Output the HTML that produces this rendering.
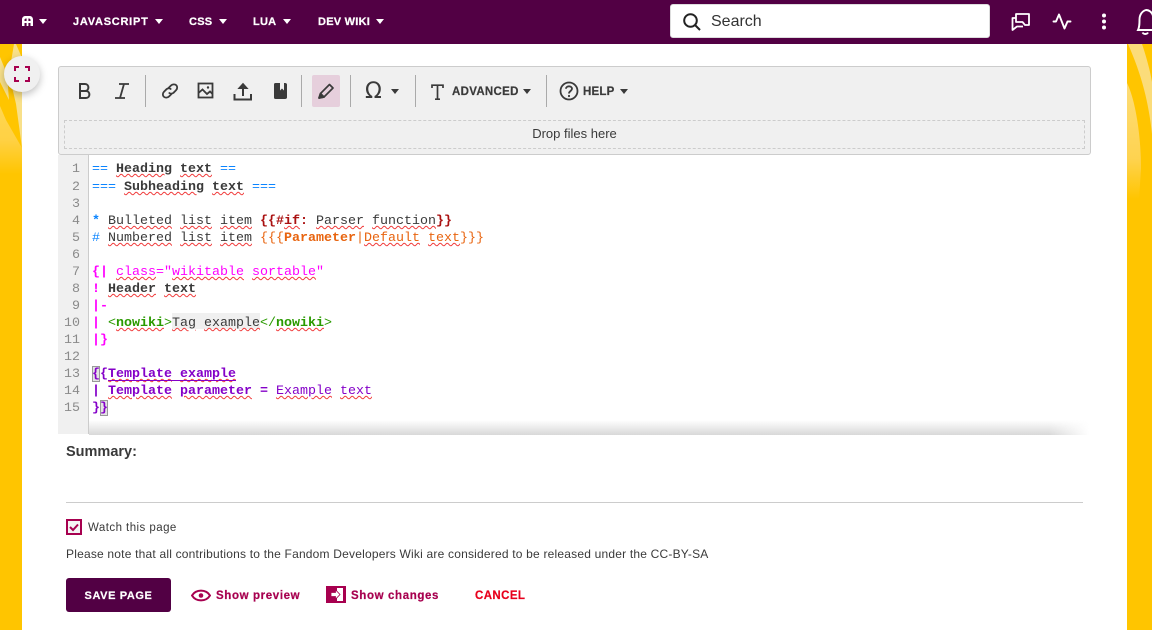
<!DOCTYPE html>
<html lang="en"><head><meta charset="utf-8"><title>Editing</title>
<style>
*{box-sizing:border-box}
html,body{margin:0;padding:0;width:1152px;height:630px;overflow:hidden;background:#fff;font-family:"Liberation Sans",sans-serif;color:#3a3a3a}
.a{position:absolute}
#top{left:0;top:0;width:1152px;height:44px;background:#520044}
.nav{position:absolute;top:16px;font:bold 11px/13px "Liberation Sans",sans-serif;color:#fff;letter-spacing:.25px;white-space:nowrap;-webkit-text-stroke:.25px #fff}
.car{position:absolute;width:0;height:0;border-left:4.5px solid transparent;border-right:4.5px solid transparent;border-top:5px solid #fff}
.car.d{border-left-width:4.5px;border-right-width:4.5px;border-top-color:#3a3a3a}
.sep{position:absolute;top:75px;width:1px;height:32px;background:#aaa}
.cm{position:absolute;left:92px;font:13.333px/17px "Liberation Mono",monospace;white-space:pre;color:#3a3a3a}
.ln{position:absolute;left:58px;width:22px;text-align:right;font:13.333px/17px "Liberation Mono",monospace;color:#8a8a8a}
u{text-decoration:underline wavy #f03a3a 1.2px;text-underline-offset:1px}
b{font-weight:bold}
.bl{color:#0a84ff}.h{font-weight:bold;color:#3a3a3a}.fn{color:#a11;font-weight:bold}.p{color:#e8640f}.t{color:#f0f}.g{color:#2a9a00}.tp{color:#8400c8}
.lk{position:absolute;top:590px;font:bold 11.5px/13px "Liberation Sans",sans-serif;color:#a7004f;letter-spacing:.63px;white-space:nowrap;-webkit-text-stroke:.2px currentColor}
</style></head><body>

<!-- side banners -->
<svg class="a" style="left:0;top:44px" width="22" height="130" viewBox="0 0 22 130">
<defs>
<linearGradient id="f" x1="0" y1="0" x2="0" y2="1"><stop offset="0" stop-color="#ffd650"/><stop offset=".5" stop-color="#ffd144"/><stop offset="1" stop-color="#ffc500"/></linearGradient>
<linearGradient id="r" x1="0" y1="0" x2="0" y2="1"><stop offset="0" stop-color="#fddc78"/><stop offset=".65" stop-color="#fed350"/><stop offset="1" stop-color="#ffc500"/></linearGradient>
</defs>
<rect width="22" height="130" fill="#ffc500"/>
<path d="M0 62L6 76L22 104V130H0Z" fill="url(#f)"/>
<path d="M14 0H16L22 14V104L16 60L9 30Z" fill="#f8e08a"/>
<path d="M0 13L7 30L9 56L0 38Z" fill="#f8e08a"/>
</svg>
<div class="a" style="left:0;top:174px;width:22px;height:456px;background:#ffc500"></div>
<svg class="a" style="left:1127px;top:44px" width="25" height="586" viewBox="0 0 25 586">
<rect width="25" height="586" fill="#ffc500"/>
<path d="M1 0H15C19 12 23 26 25 38V90C21 52 12 25 1 0Z" fill="#fbdc7a"/>
<path d="M0 39C8 55 14 90 14 125L12 155H0Z" fill="url(#r)"/>
</svg>

<!-- top nav -->
<div id="top" class="a">
<svg class="a" style="left:21px;top:15px" width="13" height="12" viewBox="0 0 13 12"><path d="M1 11V4.500C1 2.500 2.500 1 4 1H9C10.500 1 12 2.500 12 4.500V11H9.500V8H7.400V11H5.600V8H3.500V11ZM3.500 4.800V6H5.600V3.500C4.500 3.300 3.500 3.800 3.500 4.800ZM7.400 3.500V6H9.500V4.800C9.500 3.800 8.500 3.300 7.400 3.500Z" fill="#fff" fill-rule="evenodd"/></svg>
<i class="car" style="left:39px;top:19px"></i>
<span class="nav" style="left:73px;letter-spacing:.75px">JAVASCRIPT</span><i class="car" style="left:155px;top:19px"></i>
<span class="nav" style="left:189px">CSS</span><i class="car" style="left:219px;top:19px"></i>
<span class="nav" style="left:253px">LUA</span><i class="car" style="left:283px;top:19px"></i>
<span class="nav" style="left:318px">DEV WIKI</span><i class="car" style="left:376px;top:19px"></i>
<div class="a" style="left:670px;top:4px;width:320px;height:34px;background:#fff;border:1px solid #ddd;border-radius:3px"></div>
<svg class="a" style="left:682px;top:12px" width="20" height="20" viewBox="0 0 20 20" fill="none" stroke="#222" stroke-width="2"><circle cx="8.500" cy="8.500" r="6.300"/><path d="M13 13L18 18"/></svg>
<span class="a" style="left:711px;top:12px;font:16px/19px 'Liberation Sans',sans-serif;color:#333">Search</span>
<svg class="a" style="left:1010px;top:12px" width="20" height="20" viewBox="0 0 20 20" fill="none" stroke="#fff" stroke-width="1.800" stroke-linejoin="round"><path d="M6 2H19V13H15L12.500 10H6Z"/><path d="M6 6H2.500V18L7 14.500H13"/></svg>
<svg class="a" style="left:1052px;top:12px" width="20" height="20" viewBox="0 0 20 20" fill="none" stroke="#fff" stroke-width="1.900" stroke-linejoin="round" stroke-linecap="round"><path d="M1.500 9.500H4L7 2.500L12.500 16.500L15.500 9.500H18.500"/></svg>
<svg class="a" style="left:1100px;top:12px" width="8" height="20" viewBox="0 0 8 20" fill="#fff"><circle cx="4" cy="3.500" r="2"/><circle cx="4" cy="9.500" r="2"/><circle cx="4" cy="15.500" r="2"/></svg>
<svg class="a" style="left:1136px;top:9px" width="16" height="26" viewBox="0 0 16 26" fill="none" stroke="#fff" stroke-width="1.900"><path d="M2 21C3.500 18 3.500 15 3.500 10.500C3.500 6 6 2 10 1C13 1 16 3 17 7V21H2Z"/><path d="M6.500 23.500C7.500 25.500 11 25.500 12 23.500"/></svg>
</div>

<!-- page body -->
<div class="a" style="left:4px;top:56px;width:36px;height:36px;border-radius:50%;background:#f0f0f0;box-shadow:0 3px 8px rgba(0,0,0,.25)"></div>
<svg class="a" style="left:14px;top:66px" width="16" height="16" viewBox="0 0 16 16" fill="none" stroke="#a7004f" stroke-width="2"><path d="M1 5V1H5M11 1H15V5M15 11V15H11M5 15H1V11"/></svg>

<!-- toolbar -->
<div class="a" style="left:58px;top:66px;width:1033px;height:89px;background:#f0f0f0;border:1px solid #ccc;border-radius:3px"></div>
<div class="a" style="left:64px;top:120px;width:1021px;height:29px;border:1px dashed #ccc;text-align:center;font:13px/26px 'Liberation Sans',sans-serif;color:#3a3a3a">Drop files here</div>

<svg class="a" style="left:75px;top:81px" width="18" height="20" viewBox="0 0 18 20" fill="none" stroke="#3a3a3a" stroke-width="2"><path d="M5 3H10C14.500 3 14.500 10 10 10H5ZM5 10H11C15.500 10 15.500 17 11 17H5Z"/></svg>
<svg class="a" style="left:113px;top:81px" width="18" height="20" viewBox="0 0 18 20" fill="none" stroke="#3a3a3a" stroke-width="1.800"><path d="M6 3H16M2 17H12M11 3L7 17"/></svg>
<div class="sep" style="left:145px"></div>
<svg class="a" style="left:161px;top:82px" width="18" height="18" viewBox="0 0 18 18" fill="none" stroke="#3a3a3a" stroke-width="1.800"><path d="M7.500 6L10 3.500C11.500 2 14 2 15.300 3.300C16.500 4.500 16.500 6.800 15 8.300L12.500 10.800C11 12 9 12 7.800 10.500"/><path d="M10.500 12L8 14.500C6.500 16 4 16 2.800 14.700C1.500 13.400 1.500 11.200 3 9.700L5.500 7.200C7 6 9 6 10.200 7.500"/></svg>
<svg class="a" style="left:197px;top:82px" width="18" height="18" viewBox="0 0 18 18" fill="none" stroke="#3a3a3a" stroke-width="1.800"><rect x="1.500" y="1.500" width="14" height="14"/><path d="M1.500 11L5.500 7.500L10 12L13 9.500L15.500 12"/><circle cx="11" cy="5.500" r="1.200" fill="#3a3a3a" stroke="none"/></svg>
<svg class="a" style="left:233px;top:81px" width="20" height="20" viewBox="0 0 20 20" fill="none" stroke="#3a3a3a" stroke-width="2"><path d="M1.500 13V18.500H18V13"/><path d="M10 15V3"/><path d="M5.500 7.500L10 2.500L14.500 7.500Z" fill="#3a3a3a" stroke-width="1"/></svg>
<svg class="a" style="left:273px;top:82px" width="14" height="18" viewBox="0 0 14 18"><path d="M1 2.500C1 1.500 1.500 1 2.500 1H7V8.500L9 6.500L11 8.500V1H12C13 1 14 1.500 14 2.500V15.500C14 16.500 13 17 12 17H2.500C1.500 17 1 16.500 1 15.500Z" fill="#3a3a3a"/></svg>
<div class="sep" style="left:301px"></div>
<div class="a" style="left:312px;top:75px;width:28px;height:32px;background:#e6cfdc;border-radius:2px"></div>
<svg class="a" style="left:317px;top:82px" width="19" height="18" viewBox="0 0 19 18" fill="none" stroke="#3a3a3a" stroke-width="1.700" stroke-linejoin="round"><path d="M2 16L3.500 11.500L12.500 2.500L16 6L7 15Z"/><path d="M2 16L7 15L3.500 11.500Z" fill="#3a3a3a"/></svg>
<div class="sep" style="left:350px"></div>
<span class="a" style="left:365px;top:79px;font:22px/26px 'DejaVu Sans',sans-serif;color:#3a3a3a">Ω</span>
<i class="car d" style="left:391px;top:89px"></i>
<div class="sep" style="left:415px"></div>
<svg class="a" style="left:431px;top:84px" width="13" height="16" viewBox="0 0 13 16" fill="none" stroke="#3a3a3a" stroke-width="1.700"><path d="M1 4V1.200H12V4M6.500 1.200V15M4 15.200H9"/></svg>
<span class="a" style="left:452px;top:85px;font:bold 11.500px/14px 'Liberation Sans',sans-serif;color:#3a3a3a;letter-spacing:.3px;-webkit-text-stroke:.2px #3a3a3a">ADVANCED</span>
<i class="car d" style="left:523px;top:89px"></i>
<div class="sep" style="left:546px"></div>
<svg class="a" style="left:559px;top:81px" width="20" height="20" viewBox="0 0 20 20" fill="none" stroke="#3a3a3a" stroke-width="1.800"><circle cx="10" cy="10" r="8.500"/><path d="M7 7.800C7 4.500 13 4.500 13 7.800C13 10 10 10 10 12.500"/><circle cx="10" cy="15" r="1.100" fill="#3a3a3a" stroke="none"/></svg>
<span class="a" style="left:583px;top:85px;font:bold 11.500px/14px 'Liberation Sans',sans-serif;color:#3a3a3a;letter-spacing:.2px;-webkit-text-stroke:.2px #3a3a3a">HELP</span>
<i class="car d" style="left:620px;top:89px"></i>

<!-- editor -->
<div class="a" style="left:58px;top:155px;width:31px;height:279px;background:#f0f0f0;border-right:1px solid #ccc"></div>
<div class="a" style="left:89px;top:420px;width:1000px;height:15px;background:linear-gradient(to bottom,rgba(216,216,216,0),#d8d8d8);-webkit-mask-image:linear-gradient(to right,#000 96%,transparent)"></div>

<div class="ln" style="top:161px">1</div><div class="ln" style="top:179px">2</div><div class="ln" style="top:196px">3</div><div class="ln" style="top:213px">4</div><div class="ln" style="top:230px">5</div><div class="ln" style="top:247px">6</div><div class="ln" style="top:264px">7</div><div class="ln" style="top:281px">8</div><div class="ln" style="top:298px">9</div><div class="ln" style="top:315px">10</div><div class="ln" style="top:332px">11</div><div class="ln" style="top:349px">12</div><div class="ln" style="top:366px">13</div><div class="ln" style="top:383px">14</div><div class="ln" style="top:400px">15</div>

<div class="a" style="left:172px;top:313px;width:88px;height:16px;background:#f0f0f0"></div>
<div class="a" style="left:92px;top:366px;width:8px;height:16px;background:#e4e4e4;border:1px solid #999"></div>
<div class="a" style="left:100px;top:400px;width:8px;height:16px;background:#e4e4e4;border:1px solid #999"></div>

<div class="cm" style="top:161px"><span class="bl">== </span><span class="h"><u>Heading</u> <u>text</u></span><span class="bl"> ==</span></div>
<div class="cm" style="top:179px"><span class="bl">=== </span><span class="h"><u>Subheading</u> <u>text</u></span><span class="bl"> ===</span></div>
<div class="cm" style="top:213px"><b class="bl">*</b> <u>Bulleted</u> <u>list</u> <u>item</u> <span class="fn">{{#<u>if</u>:</span> <u>Parser</u> <u>function</u><span class="fn">}}</span></div>
<div class="cm" style="top:230px"><span class="bl">#</span> <u>Numbered</u> <u>list</u> <u>item</u> <span class="p">{{{<b>Parameter</b>|<u>Default</u> <u>text</u>}}}</span></div>
<div class="cm" style="top:264px"><b class="t">{|</b> <span class="t"><u>class</u>="<u>wikitable</u> <u>sortable</u>"</span></div>
<div class="cm" style="top:281px"><b class="t">!</b> <span class="h"><u>Header</u> <u>text</u></span></div>
<div class="cm" style="top:298px"><b class="t">|-</b></div>
<div class="cm" style="top:315px"><b class="t">|</b> <span class="g">&lt;<b><u>nowiki</u></b>&gt;</span><u>Tag</u> <u>example</u><span class="g">&lt;/<b><u>nowiki</u></b>&gt;</span></div>
<div class="cm" style="top:332px"><b class="t">|}</b></div>
<div class="cm tp" style="top:366px"><b>{{<u>Template</u> <u>example</u></b></div>
<div class="a" style="left:108px;top:380px;width:128px;height:1px;background:#8400c8"></div>
<div class="cm tp" style="top:383px"><b>| <u>Template</u> <u>parameter</u> =</b> <u>Example</u> <u>text</u></div>
<div class="cm tp" style="top:400px"><b>}}</b></div>

<!-- form -->
<div class="a" style="left:66px;top:444px;font:bold 14.500px/16px 'Liberation Sans',sans-serif;color:#3a3a3a">Summary:</div>
<div class="a" style="left:66px;top:502px;width:1017px;height:1px;background:#ccc"></div>
<div class="a" style="left:66px;top:519px;width:16px;height:16px;border:2px solid #a7004f;background:#f4f4f4"></div>
<svg class="a" style="left:68px;top:521px" width="12" height="12" viewBox="0 0 12 12" fill="none" stroke="#a7004f" stroke-width="2"><path d="M2 6L5 9L10 3.500"/></svg>
<div class="a" style="left:88px;top:521px;font:11.500px/14px 'Liberation Sans',sans-serif;color:#3a3a3a;letter-spacing:.45px;white-space:nowrap">Watch this page</div>
<div class="a" style="left:66px;top:547px;font:12px/14px 'Liberation Sans',sans-serif;color:#3a3a3a;letter-spacing:.2px;white-space:nowrap">Please note that all contributions to the Fandom Developers Wiki are considered to be released under the CC-BY-SA</div>

<div class="a" style="left:66px;top:578px;width:105px;height:34px;background:#520044;border-radius:3px;color:#fff;font:bold 11px/36px 'Liberation Sans',sans-serif;text-align:center;letter-spacing:.6px;-webkit-text-stroke:.2px #fff">SAVE PAGE</div>
<svg class="a" style="left:191px;top:587px" width="20" height="17" viewBox="0 0 20 17" fill="none" stroke="#a7004f" stroke-width="2"><path d="M1 8.500C5 2 15 2 19 8.500C15 15 5 15 1 8.500Z"/><circle cx="10" cy="8.500" r="2.300" fill="#a7004f" stroke="none"/></svg>
<span class="lk" style="left:216px">Show preview</span>
<div class="a" style="left:326px;top:586px;width:20px;height:17px;background:#a7004f"></div>
<svg class="a" style="left:326px;top:586px" width="20" height="17" viewBox="0 0 20 17"><rect x="11" y="2" width="6" height="13" fill="#fff"/><path d="M5 6.500H9.500V3.800L14 8.500L9.500 13.200V10.500H5Z" fill="#fff" stroke="#a7004f" stroke-width=".8"/></svg>
<span class="lk" style="left:351px">Show changes</span>
<span class="lk" style="left:475px;color:#e8001c;letter-spacing:.4px">CANCEL</span>
</body></html>
